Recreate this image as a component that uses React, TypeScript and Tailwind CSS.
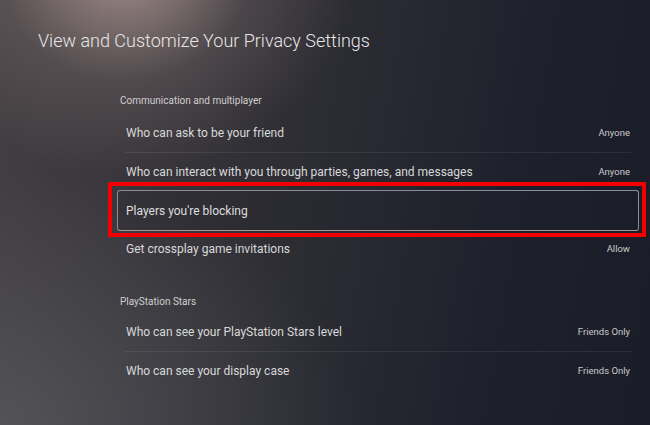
import React from 'react';

type Row = { label: string; value?: string; selected?: boolean };

const communication: Row[] = [
  { label: 'Who can ask to be your friend', value: 'Anyone' },
  { label: 'Who can interact with you through parties, games, and messages', value: 'Anyone' },
  { label: "Players you're blocking", selected: true },
  { label: 'Get crossplay game invitations', value: 'Allow' },
];

const stars: Row[] = [
  { label: 'Who can see your PlayStation Stars level', value: 'Friends Only' },
  { label: 'Who can see your display case', value: 'Friends Only' },
];

// Plain settings row: label on the left, current value on the right
const SettingRow: React.FC<{ row: Row; height: string }> = ({ row, height }) => (
  <div className={`flex items-center justify-between px-[9px] ${height}`}>
    <span className="text-[12px] leading-4 text-[#d9d9d9]">{row.label}</span>
    {row.value && <span className="text-[9.5px] leading-4 text-[#c9c9c9]">{row.value}</span>}
  </div>
);

const SelectedRow: React.FC<{ row: Row }> = ({ row }) => (
  <div className="relative">
    <div className="flex h-[41px] items-center rounded-[3px] border-[1.5px] border-[#8a8c99] border-b-[#a2968f] bg-[#1c1e27]/20 px-[8px]">
      <span className="text-[12px] leading-4 text-[#dedede]">{row.label}</span>
    </div>
    {/* red annotation frame */}
    <div className="pointer-events-none absolute -top-[8px] -bottom-[6px] -left-[9px] -right-[7px] border-4 border-[#f20000]" />
  </div>
);

const Divider = () => <div className="mx-[8px] h-px bg-white/[0.07]" />;

export default function App() {
  return (
    <div
      className="h-[425px] w-[650px] overflow-hidden bg-[radial-gradient(ellipse_230px_210px_at_125px_-35px,rgba(190,165,160,0.8),rgba(150,130,128,0.25)_55%,transparent),radial-gradient(ellipse_360px_260px_at_0px_430px,rgba(100,102,108,0.55),transparent),linear-gradient(100deg,#433f42_0%,#313036_38%,#1e212c_75%,#1a1d28_100%)]"
      style={{ fontFamily: 'Roboto, "Liberation Sans", sans-serif' }}
    >
      <h1 className="pl-[38px] pt-[29px] text-[18px] font-light leading-6 text-[#e8e6e6]">
        View and Customize Your Privacy Settings
      </h1>

      <div className="ml-[117px] w-[522px]">
        <div className="mt-[40px] h-4 pl-[3px] text-[10px] leading-4 text-[#cfcfcf]">
          Communication and multiplayer
        </div>

        <div className="mt-[5px]">
          <SettingRow row={communication[0]} height="h-[38px]" />
          <Divider />
          <SettingRow row={communication[1]} height="h-[37px]" />
          <SelectedRow row={communication[2]} />
          <SettingRow row={communication[3]} height="h-[35px]" />
        </div>

        <div className="mt-[28px] h-4 pl-[3px] text-[10px] leading-4 text-[#cfcfcf]">PlayStation Stars</div>

        <div className="mt-[3px]">
          <SettingRow row={stars[0]} height="h-[38px]" />
          <Divider />
          <SettingRow row={stars[1]} height="h-[37px]" />
        </div>
      </div>
    </div>
  );
}
